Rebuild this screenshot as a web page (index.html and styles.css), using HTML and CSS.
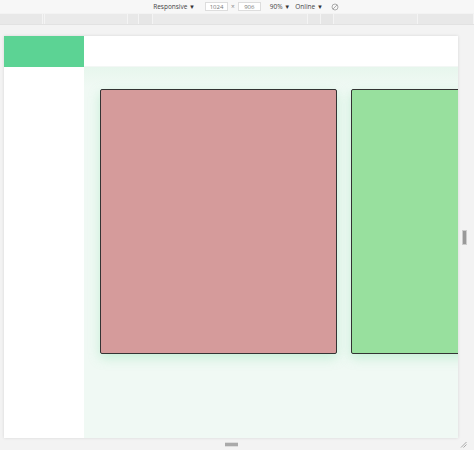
FILE: index.html
```html
<!DOCTYPE html>
<html lang="en">
<head>
    <meta charset="UTF-8">
    <meta name="viewport" content="width=device-width, initial-scale=1.0">
    <title>Document</title>

    <link rel="stylesheet" href="styles.css">
</head>
<body>
    <div class="toolbar">
        <span class="tool-item device">Responsive <span class="caret">&#9660;</span></span>
        <span class="dim-box">1024</span>
        <span class="times">&times;</span>
        <span class="dim-box">906</span>
        <span class="tool-item zoom">90% <span class="caret">&#9660;</span></span>
        <span class="tool-item">Online <span class="caret">&#9660;</span></span>
        <svg class="rotate" width="8" height="8" viewBox="0 0 8 8">
            <circle cx="4" cy="4" r="3" fill="none" stroke="#999" stroke-width="0.8"/>
            <line x1="2" y1="6" x2="6" y2="2" stroke="#999" stroke-width="0.8"/>
        </svg>
    </div>

    <div class="mq-bar">
        <div class="mq s1"></div>
        <div class="mq s2"></div>
        <div class="mq s3"></div>
        <div class="mq s4"></div>
        <div class="mq s5"></div>
        <div class="mq s6"></div>
        <div class="mq s7"></div>
        <div class="mq s8"></div>
        <div class="mq s9"></div>
        <div class="mq s10"></div>
    </div>

    <div class="stage">
        <div class="viewport">
            <div class="logo"></div>
            <div class="topbar"></div>
            <div class="sidebar"></div>
            <div class="content">
                <div class="card red"></div>
                <div class="card green"></div>
            </div>
        </div>
        <div class="side-handle-col">
            <div class="side-handle"></div>
        </div>
        <div class="bottom-row">
            <div class="bottom-handle"></div>
        </div>
        <div class="corner">
            <svg width="7" height="7" viewBox="0 0 7 7">
                <line x1="1" y1="6.5" x2="6.5" y2="1" stroke="#888" stroke-width="0.7"/>
                <line x1="3.5" y1="6.5" x2="6.5" y2="3.5" stroke="#888" stroke-width="0.7"/>
            </svg>
        </div>
    </div>
</body>
</html>
```

FILE: styles.css
```css
html, body {
    margin: 0;
    padding: 0;
}
body {
    width: 474px;
    height: 450px;
    background-color: #f3f3f3;
    font-family: "Open Sans", "Liberation Sans", sans-serif;
    overflow: hidden;
}
.toolbar {
    height: 13px;
    background-color: #f7f7f7;
    display: flex;
    align-items: center;
    justify-content: center;
    padding-left: 18px;
    font-size: 6.5px;
    color: #444;
}
.tool-item {
    white-space: nowrap;
}
.device {
    margin-right: 10px;
}
.caret {
    font-size: 6px;
    color: #333;
}
.zoom {
    margin: 0 5px 0 9px;
}
.dim-box {
    width: 23px;
    height: 9px;
    line-height: 9px;
    border: 1px solid #ddd;
    background-color: #fff;
    color: #777;
    text-align: center;
    box-sizing: border-box;
    font-size: 6px;
}
.times {
    color: #888;
    font-size: 6.5px;
    margin: 0 3px;
}
.rotate {
    margin-left: 8px;
}
.mq-bar {
    height: 10px;
    margin-top: 1px;
    display: flex;
    background-color: #e9e9e9;
    border-bottom: 1px solid #e2e2e2;
}
.mq {
    border-right: 1px solid #f4f4f4;
    box-sizing: border-box;
    background-color: #e8e8e8;
}
.s1 { width: 43px; }
.s2 { width: 2px; }
.s3 { width: 83px; background-color: #eaeaea; }
.s4 { width: 11px; }
.s5 { width: 14px; background-color: #e6e6e6; }
.s6 { width: 155px; background-color: #eaeaea; }
.s7 { width: 13px; }
.s8 { width: 13px; background-color: #e6e6e6; }
.s9 { width: 84px; background-color: #eaeaea; }
.s10 { flex: 1; }
.stage {
    display: grid;
    grid-template-columns: 454px 16px;
    grid-template-rows: 402px 13px;
    padding: 11px 0 0 4px;
}
.viewport {
    display: grid;
    grid-template-columns: 80px 1fr;
    grid-template-rows: 31px 1fr;
    background-color: #fff;
    box-shadow: 0 0 3px rgba(0, 0, 0, 0.12);
    overflow: hidden;
}
.logo {
    background-color: #5cd394;
}
.topbar {
    background-color: #fff;
    border-bottom: 1px solid #f3f7f5;
}
.sidebar {
    background-color: #fff;
}
.content {
    background-color: #f0f9f4;
    background-image: linear-gradient(#e7f6ed, #f0f9f4 20px);
    display: flex;
    gap: 14px;
    padding: 22px 0 0 16px;
    overflow: hidden;
}
.card {
    flex: none;
    width: 237px;
    height: 265px;
    box-sizing: border-box;
    border: 1px solid #333;
    border-radius: 2px;
    box-shadow: 0 4px 12px rgba(120, 220, 160, 0.35);
}
.red {
    background-color: #d59b9b;
}
.green {
    background-color: #98e09e;
}
.side-handle-col {
    display: flex;
    align-items: center;
    padding-left: 4px;
}
.side-handle {
    width: 3px;
    height: 13px;
    background-color: #999;
    border: 1px solid #ccc;
}
.bottom-row {
    display: flex;
    justify-content: center;
    align-items: center;
}
.bottom-handle {
    width: 13px;
    height: 3px;
    background-color: #aaa;
    border-top: 1px solid #ddd;
    border-bottom: 1px solid #ddd;
}
.corner {
    display: flex;
    align-items: center;
    padding-left: 2px;
}
```
